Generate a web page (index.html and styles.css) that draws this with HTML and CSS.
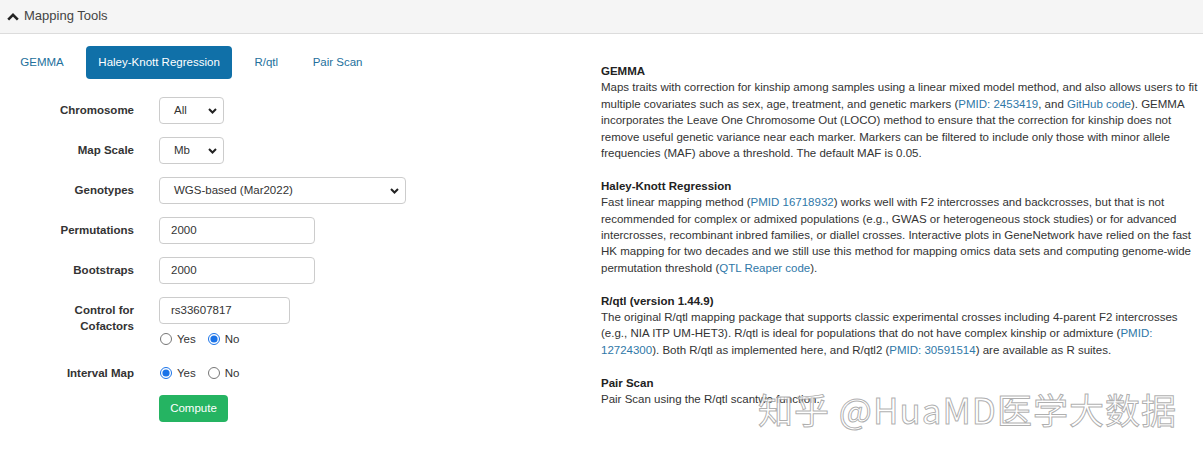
FILE: index.html
```html
<!DOCTYPE html>
<html lang="en">
<head>
<meta charset="utf-8">
<title>Mapping Tools</title>
<link rel="stylesheet" href="styles.css">
</head>
<body>
<div class="panel-heading">
  <svg class="caret" width="12" height="9" viewBox="0 0 12 9"><polyline points="1.2,7.6 6,2.8 10.8,7.6" fill="none" stroke="#222" stroke-width="2.6"/></svg>
  <span>Mapping Tools</span>
</div>
<div class="main">
  <div class="left">
    <ul class="tabs">
      <li><a class="tab">GEMMA</a></li>
      <li><a class="tab active">Haley-Knott Regression</a></li>
      <li><a class="tab">R/qtl</a></li>
      <li><a class="tab">Pair Scan</a></li>
    </ul>
    <div class="form">
      <label class="lbl">Chromosome</label>
      <div class="ctl"><span class="sel w65">All<svg class="chev" width="9" height="6" viewBox="0 0 9 6"><polyline points="1,1 4.5,4.5 8,1" fill="none" stroke="#222" stroke-width="2"/></svg></span></div>

      <label class="lbl">Map Scale</label>
      <div class="ctl"><span class="sel w65">Mb<svg class="chev" width="9" height="6" viewBox="0 0 9 6"><polyline points="1,1 4.5,4.5 8,1" fill="none" stroke="#222" stroke-width="2"/></svg></span></div>

      <label class="lbl">Genotypes</label>
      <div class="ctl"><span class="sel w247">WGS-based (Mar2022)<svg class="chev" width="9" height="6" viewBox="0 0 9 6"><polyline points="1,1 4.5,4.5 8,1" fill="none" stroke="#222" stroke-width="2"/></svg></span></div>

      <label class="lbl">Permutations</label>
      <div class="ctl"><input class="inp w156" type="text" value="2000"></div>

      <label class="lbl">Bootstraps</label>
      <div class="ctl"><input class="inp w156" type="text" value="2000"></div>

      <label class="lbl">Control for<br>Cofactors</label>
      <div class="ctl">
        <input class="inp w131" type="text" value="rs33607817">
        <div class="radios mt7">
          <label class="opt"><input type="radio" name="cof">Yes</label>
          <label class="opt"><input type="radio" name="cof" checked>No</label>
        </div>
      </div>

      <label class="lbl">Interval Map</label>
      <div class="ctl">
        <div class="radios pt5">
          <label class="opt"><input type="radio" name="im" checked>Yes</label>
          <label class="opt"><input type="radio" name="im">No</label>
        </div>
      </div>

      <span></span>
      <div class="ctl"><button class="btn">Compute</button></div>
    </div>
  </div>
  <div class="right">
    <section class="desc">
      <h4>GEMMA</h4>
      <p>Maps traits with correction for kinship among samples using a linear mixed model method, and also allows users to fit multiple covariates such as sex, age, treatment, and genetic markers (<a>PMID: 2453419</a>, and <a>GitHub code</a>). GEMMA incorporates the Leave One Chromosome Out (LOCO) method to ensure that the correction for kinship does not remove useful genetic variance near each marker. Markers can be filtered to include only those with minor allele frequencies (MAF) above a threshold. The default MAF is 0.05.</p>
    </section>
    <section class="desc">
      <h4>Haley-Knott Regression</h4>
      <p>Fast linear mapping method (<a>PMID 16718932</a>) works well with F2 intercrosses and backcrosses, but that is not recommended for complex or admixed populations (e.g., GWAS or heterogeneous stock studies) or for advanced intercrosses, recombinant inbred families, or diallel crosses. Interactive plots in GeneNetwork have relied on the fast HK mapping for two decades and we still use this method for mapping omics data sets and computing genome-wide permutation threshold (<a>QTL Reaper code</a>).</p>
    </section>
    <section class="desc">
      <h4>R/qtl (version 1.44.9)</h4>
      <p>The original R/qtl mapping package that supports classic experimental crosses including 4-parent F2 intercrosses (e.g., NIA ITP UM-HET3). R/qtl is ideal for populations that do not have complex kinship or admixture (<a>PMID: 12724300</a>). Both R/qtl as implemented here, and R/qtl2 (<a>PMID: 30591514</a>) are available as R suites.</p>
    </section>
    <section class="desc">
      <h4>Pair Scan</h4>
      <p>Pair Scan using the R/qtl scantwo function.</p>
    </section>
  </div>
</div>
<div class="watermark">知乎 @HuaMD医学大数据</div>
</body>
</html>
```

FILE: styles.css
```css
* { box-sizing: border-box; }
html, body { margin: 0; padding: 0; background: #fff; }
body {
  font-family: "Liberation Sans", Arial, sans-serif;
  font-size: 11.5px;
  line-height: 16.4px;
  color: #333;
  width: 1203px;
  height: 460px;
  overflow: hidden;
  position: relative;
}
.panel-heading {
  height: 34px;
  background: #f5f5f5;
  border-bottom: 1px solid #dcdcdc;
  display: flex;
  align-items: center;
  padding-left: 7px;
  font-size: 13px;
  color: #444;
}
.caret { margin-right: 5px; margin-top: -1px; }
.main {
  display: flex;
  padding-left: 8px;
}
.left { width: 593px; flex: 0 0 593px; padding-top: 12px; }
.right { flex: 1; padding-top: 29px; }

.tabs {
  list-style: none;
  margin: 0;
  padding: 0;
  display: flex;
  gap: 10px;
}
.tab {
  display: block;
  padding: 8.2px 12.3px;
  border-radius: 4px;
  color: #23709c;
  cursor: pointer;
}
.tab.active { background: #1070a8; color: #fff; }

.form {
  margin-top: 18px;
  display: grid;
  grid-template-columns: 126px auto;
  column-gap: 25px;
  row-gap: 13px;
  align-items: start;
}
.lbl {
  text-align: right;
  font-weight: bold;
  color: #333;
  padding-top: 5px;
}
.ctl { display: flex; flex-direction: column; align-items: flex-start; }
.sel {
  position: relative;
  display: block;
  height: 27px;
  border: 1px solid #ccc;
  border-radius: 4px;
  background: #fff;
  padding: 4px 0 0 14px;
  color: #333;
}
.chev { position: absolute; right: 6px; top: 10px; }
.w65 { width: 65px; }
.w247 { width: 247px; }
.inp {
  height: 27px;
  border: 1px solid #ccc;
  border-radius: 4px;
  padding: 0 11px;
  font: inherit;
  color: #333;
  background: #fff;
}
.w156 { width: 156px; }
.w131 { width: 131px; }
.radios { display: flex; gap: 11px; }
.mt7 { margin-top: 7px; }
.pt5 { padding-top: 5px; }
.opt { display: inline-flex; align-items: center; }
.opt input {
  width: 12px;
  height: 12px;
  margin: 0 5px 0 1px;
  accent-color: #1a73e8;
}
.btn {
  height: 27px;
  width: 69px;
  border: 0;
  border-radius: 4px;
  background: #25b462;
  color: #fff;
  font: inherit;
  padding: 0;
}

.desc { margin-bottom: 16.4px; }
.desc h4 {
  margin: 0;
  font-size: 11.5px;
  font-weight: bold;
  color: #222;
}
.desc p { margin: 0; }
.desc a { color: #2f78a8; }

.watermark {
  position: absolute;
  left: 758px;
  top: 384px;
  font-family: "Noto Sans CJK SC", "Liberation Sans", sans-serif;
  font-size: 35px;
  line-height: 50px;
  color: rgba(255, 255, 255, 0.75);
  -webkit-text-stroke: 1px rgba(140, 140, 140, 0.7);
  white-space: nowrap;
  letter-spacing: 1px;
}
```
